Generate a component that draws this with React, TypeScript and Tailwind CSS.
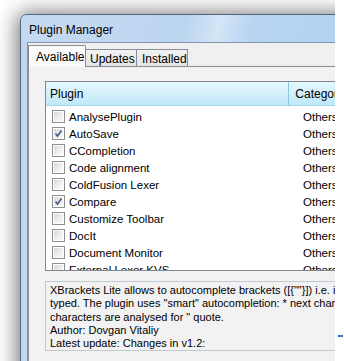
import React from "react";

const plugins: { name: string; checked: boolean }[] = [
  { name: "AnalysePlugin", checked: false },
  { name: "AutoSave", checked: true },
  { name: "CCompletion", checked: false },
  { name: "Code alignment", checked: false },
  { name: "ColdFusion Lexer", checked: false },
  { name: "Compare", checked: true },
  { name: "Customize Toolbar", checked: false },
  { name: "DocIt", checked: false },
  { name: "Document Monitor", checked: false },
  { name: "External Lexer KVS", checked: false },
];

function CheckBox({ checked }: { checked: boolean }) {
  return (
    <div className="w-[13px] h-[13px] border border-[#8e8f8f] bg-white p-px shrink-0">
      <div className="w-full h-full bg-[linear-gradient(135deg,#d8d8d8_0%,#f0f0f0_60%,#fbfbfb_100%)] relative">
        {checked && (
          <svg viewBox="0 0 11 11" className="absolute -left-px -top-px w-[11px] h-[11px]">
            <path d="M2.5 5.5 L4.5 8 L8.5 2.5" fill="none" stroke="#4b5f8f" strokeWidth="1.7" />
          </svg>
        )}
      </div>
    </div>
  );
}

export default function App() {
  const desc = [
    'XBrackets Lite allows to autocomplete brackets ([{""}]) i.e. inserts the closing bracket when the opening one is',
    'typed. The plugin uses "smart" autocompletion: * next character is analysed',
    'characters are analysed for " quote.',
    "Author: Dovgan Vitaliy",
    "Latest update: Changes in v1.2:",
  ];
  return (
    <div className="w-[344px] h-[361px] bg-white relative overflow-hidden font-['Liberation_Sans',Arial,sans-serif] text-black">
      <div className="w-[335px] h-[361px] overflow-hidden pt-[14px] pl-[20px]">
        <div className="w-[330px] h-[370px] rounded-t-[7px] border border-[#52657a] bg-[#c0d7ef] shadow-[0_2px_20px_4px_rgba(0,0,0,0.5)] flex flex-col overflow-hidden">
          <div className="h-[27px] shrink-0 pl-[8px] pt-[8px] text-[12px] leading-[14px] bg-[linear-gradient(100deg,#c4daf1_0%,#bcd5ef_50%,#d4e5f6_60%,#b8d4f2_70%,#b3d1f2_100%)]">
            Plugin Manager
          </div>
          <div className="flex-1 flex pl-[6px]">
            <div className="flex-1 border-l border-t border-[#8298b2] bg-[#f0f0f0] pt-[2px] overflow-hidden">
              <div className="border-l border-[#898c95] h-full flex flex-col text-[12px]">
                <div className="h-[22px] flex items-end shrink-0">
                  <div className="h-[22px] w-[57px] border-t border-r border-[#898c95] bg-[#fafafa] rounded-tr-[2px] pl-[7px] pt-[4px] leading-[14px]">
                    Available
                  </div>
                  <div className="h-[18px] w-[51px] border-t border-r border-b border-[#898c95] bg-[linear-gradient(#f2f2f2,#e4e4e4)] pl-[4px] pt-[2px] leading-[14px]">
                    Updates
                  </div>
                  <div className="h-[18px] w-[51px] border-t border-r border-b border-[#898c95] bg-[linear-gradient(#f2f2f2,#e4e4e4)] pl-[5px] pt-[2px] leading-[14px]">
                    Installed
                  </div>
                  <div className="flex-1 h-full border-b border-[#898c95]" />
                </div>
                <div className="flex-1 bg-[#f2f2f2] pl-[16px] pt-[14px] text-[11px]">
                  <div className="w-[300px] h-[190px] border border-[#828790] bg-white overflow-hidden">
                    <div className="h-[24px] flex border-b border-[#a5d6ee] bg-[linear-gradient(#e6f7fd,#bfe8f8)]">
                      <div className="w-[250px] border-r border-[#93c6e0] pl-[4px] flex items-center text-[12px]">Plugin</div>
                      <div className="pl-[6px] flex items-center text-[12px]">Category</div>
                    </div>
                    <div className="pt-[2px]">
                      {plugins.map((p) => (
                        <div key={p.name} className="h-[17px] flex items-center">
                          <div className="w-[251px] flex items-center pl-[6px] gap-[4px]">
                            <CheckBox checked={p.checked} />
                            <span className="text-[11.5px] leading-[14px] whitespace-nowrap">{p.name}</span>
                          </div>
                          <span className="pl-[6px] text-[11.5px] leading-[14px]">Others</span>
                        </div>
                      ))}
                    </div>
                  </div>
                  <div className="mt-[10px] w-[300px] h-[70px] border border-[#c4c8cf] bg-[#f2f2f2] pl-[4px] pt-[2px] overflow-hidden">
                    {desc.map((d) => (
                      <div key={d} className="h-[13.3px] leading-[13.3px] text-[11px] whitespace-nowrap">{d}</div>
                    ))}
                  </div>
                </div>
              </div>
            </div>
          </div>
        </div>
      </div>
      <div className="absolute left-[338px] top-[335px] w-[5px] h-[2px] bg-[#3b6fd6]" />
    </div>
  );
}
